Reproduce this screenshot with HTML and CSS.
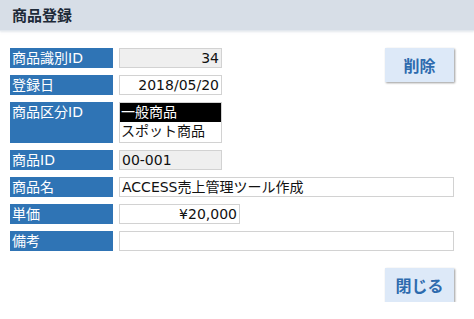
FILE: index.html
```html
<!DOCTYPE html>
<html lang="ja">
<head>
<meta charset="utf-8">
<link rel="stylesheet" href="styles.css">
</head>
<body>
<div class="header">商品登録</div>
<div class="form">
  <div class="label">商品識別ID</div>
  <div class="field ro num w103">34</div>
  <button class="btn del">削除</button>

  <div class="label">登録日</div>
  <div class="field num w103">2018/05/20</div>

  <div class="label tall">商品区分ID</div>
  <div class="listbox w103">
    <div class="opt sel">一般商品</div>
    <div class="opt">スポット商品</div>
  </div>

  <div class="label">商品ID</div>
  <div class="field ro w103">00-001</div>

  <div class="label">商品名</div>
  <div class="field wide">ACCESS売上管理ツール作成</div>

  <div class="label">単価</div>
  <div class="field num w121">¥20,000</div>

  <div class="label">備考</div>
  <div class="field wide"></div>
</div>
<div class="footer">
  <button class="btn">閉じる</button>
</div>
</body>
</html>
```
FILE: styles.css
```css
html, body {
  margin: 0;
  padding: 0;
  background: #ffffff;
  font-family: "DejaVu Sans", "Noto Sans CJK JP", sans-serif;
  font-size: 14px;
  color: #111;
}
.header {
  height: 30px;
  line-height: 30px;
  background: #d7dee7;
  border-bottom: 1px solid #e3e8ee;
  box-shadow: 0 1px 2px rgba(200, 208, 218, 0.5);
  padding-left: 12px;
  font-family: "Noto Sans CJK JP", sans-serif;
  font-weight: bold;
  font-size: 15px;
  color: #1e2a38;
}
.form {
  display: grid;
  grid-template-columns: 103px 1fr 69px;
  column-gap: 6px;
  row-gap: 7px;
  padding: 17px 20px 0 10px;
  align-items: start;
}
.label {
  grid-column: 1;
  height: 20px;
  line-height: 20px;
  background: #2f74b5;
  color: #ffffff;
  padding-left: 2px;
  box-sizing: border-box;
  white-space: nowrap;
}
.label.tall { height: 41px; }
.field {
  grid-column: 2;
  justify-self: start;
  height: 20px;
  line-height: 18px;
  box-sizing: border-box;
  border: 1px solid #d2d2d2;
  background: #ffffff;
  padding: 0 2px;
  white-space: nowrap;
  overflow: hidden;
}
.field.ro { background: #efefef; }
.field.num { text-align: right; }
.w103 { width: 103px; }
.w121 { width: 121px; }
.field.wide {
  grid-column: 2 / 4;
  justify-self: stretch;
}
.listbox {
  grid-column: 2;
  justify-self: start;
  height: 41px;
  box-sizing: border-box;
  border: 1px solid #d2d2d2;
  background: #ffffff;
}
.opt {
  height: 19px;
  line-height: 19px;
  padding-left: 1px;
  white-space: nowrap;
}
.opt.sel {
  background: #000000;
  color: #ffffff;
}
.btn {
  width: 69px;
  height: 34px;
  border: none;
  background: #dde9f8;
  color: #2d6bae;
  font-family: "Noto Sans CJK JP", sans-serif;
  font-weight: bold;
  font-size: 16px;
  box-shadow: 1px 1px 2px rgba(0, 0, 0, 0.4);
  padding: 0;
  cursor: pointer;
}
.btn.del {
  grid-column: 3;
  grid-row: 1 / span 2;
  justify-self: end;
}
.footer {
  display: flex;
  justify-content: flex-end;
  padding: 17px 20px 0 0;
}
```
